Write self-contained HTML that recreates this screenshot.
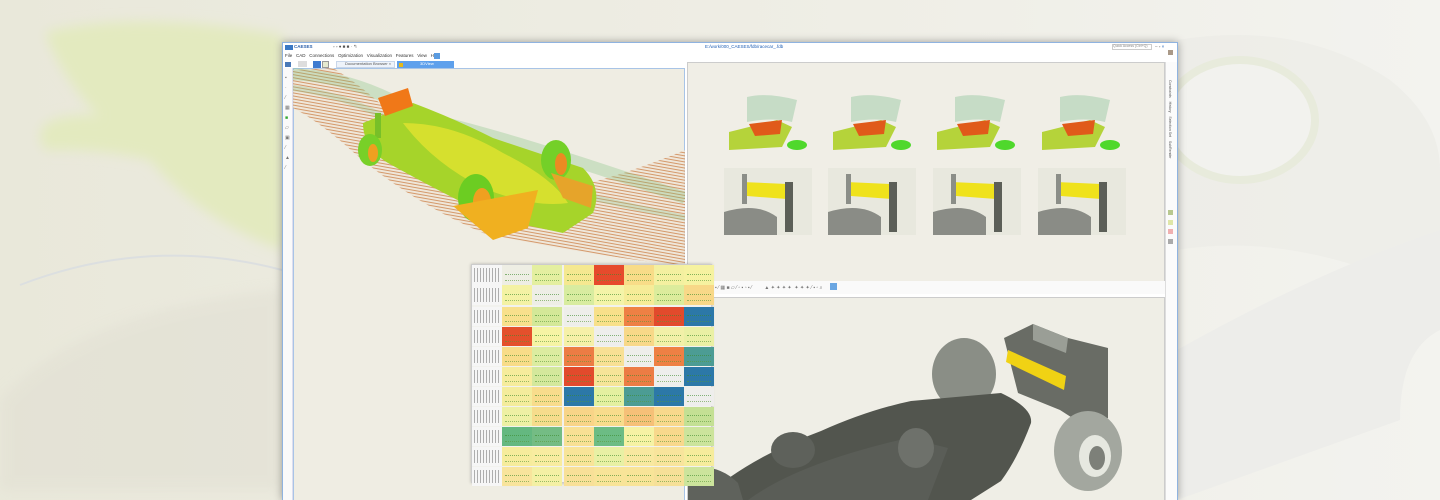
<!DOCTYPE html>
<html><head><meta charset="utf-8"><style>
*{margin:0;padding:0;box-sizing:border-box}
html,body{width:1440px;height:500px;overflow:hidden}
body{background:#ecebe0;font-family:"Liberation Sans",sans-serif;position:relative}
.a{position:absolute}
svg{overflow:hidden}
.t{font-size:4.5px;color:#333;white-space:nowrap}
#grid{position:absolute;left:471px;top:264px;width:241px;height:219px;background:#f2f2ee;border:1px solid #ccc;box-shadow:0 0 3px rgba(0,0,0,.25)}
.r{display:flex;height:19.5px;margin-bottom:.5px}
.r div{flex:0 0 29.5px;margin-right:.5px;position:relative;overflow:hidden}
.r div.s{background:#f6f6f6}
.r div:nth-child(4){margin-left:2px}
.r div::after{content:"";position:absolute;left:3px;right:3px;top:45%;height:5px;border-top:1px dotted #3a8a2a;border-bottom:1px dotted #5a9a3a;opacity:.6}
.r div.s::after{border:none;left:2px;right:2px;top:3px;bottom:3px;height:auto;background:repeating-linear-gradient(90deg,#666 0 1px,transparent 1px 3px);opacity:.5}
</style></head><body>
<svg class="a" style="left:0;top:0" width="1440" height="500">
<defs>
<linearGradient id="bg" x1="0" x2="1"><stop offset="0" stop-color="#e9e8da"/><stop offset=".6" stop-color="#efeee6"/><stop offset="1" stop-color="#f3f3ef"/></linearGradient>
<filter id="bl"><feGaussianBlur stdDeviation="6"/></filter>
<pattern id="st" width="4" height="3" patternUnits="userSpaceOnUse" patternTransform="rotate(10)"><rect width="4" height="3" fill="#efe6d8"/><rect width="4" height="1" fill="#cf8a56"/></pattern>
</defs>
<rect width="1440" height="500" fill="url(#bg)"/>
<path d="M45 32 Q140 10 282 35 L282 250 Q200 220 150 160 Q100 148 45 150 Q30 125 60 118 Q90 112 100 118 Q60 75 45 32Z" fill="#e3eabf" filter="url(#bl)"/>
<path d="M0 400 Q80 310 282 290 L282 490 L0 490Z" fill="#e0ded2" opacity=".5" filter="url(#bl)"/>
<path d="M20 285 Q150 235 282 270" stroke="#dcdfe0" stroke-width="2" fill="none"/>
<path d="M1177 40 Q1300 20 1390 80 Q1440 120 1440 170 L1440 300 Q1300 230 1177 250Z" fill="#ecece7" opacity=".8"/>
<ellipse cx="1240" cy="120" rx="75" ry="60" fill="#f2f2ee" stroke="#e8ebdc" stroke-width="8"/>
<path d="M1177 350 Q1320 270 1440 230 L1440 330 Q1400 350 1400 420 L1177 500Z" fill="#ededea"/>
</svg>

<div class="a" style="left:282px;top:42px;width:896px;height:458px;background:#fff;border:1px solid #8fb3e0;border-bottom:none;box-shadow:0 0 8px rgba(0,0,0,.35)"></div>
<div class="a" style="left:285px;top:45px;width:8px;height:5px;background:#3a78c4"></div>
<div class="a t" style="left:294px;top:44px;color:#2a5ea8;font-weight:bold">CAESES</div>
<div class="a t" style="left:333px;top:44px;color:#555">▫ ▫ ● ■ ■ · ↰</div>
<div class="a t" style="left:705px;top:44px;color:#1f5fb5">E:/work/000_CAESES/fdb/racecar_.fdb</div>
<div class="a" style="left:1112px;top:44px;width:40px;height:6px;border:1px solid #ccc"></div>
<div class="a t" style="left:1113px;top:44px;font-size:3.5px;color:#888">Quick Access (Ctrl+Q)</div>
<div class="a t" style="left:1155px;top:44px;color:#666">–&nbsp;▫&nbsp;<span style="color:#1f5fb5">×</span></div>
<div class="a t" style="left:285px;top:53px">File&nbsp;&nbsp;&nbsp;CAD&nbsp;&nbsp;&nbsp;Connections&nbsp;&nbsp;&nbsp;Optimization&nbsp;&nbsp;&nbsp;Visualization&nbsp;&nbsp;&nbsp;Features&nbsp;&nbsp;&nbsp;View&nbsp;&nbsp;&nbsp;Help</div>
<div class="a" style="left:434px;top:53px;width:6px;height:6px;background:#5b9be0"></div>
<div class="a" style="left:285px;top:62px;width:6px;height:5px;background:#4a7ab8"></div>
<div class="a" style="left:298px;top:61px;width:9px;height:6px;background:#ddd"></div>
<div class="a" style="left:313px;top:61px;width:8px;height:7px;background:#3f7bd0"></div>
<div class="a" style="left:322px;top:61px;width:7px;height:7px;background:#e6ead0;border:1px solid #999"></div>
<div class="a" style="left:336px;top:61px;width:59px;height:7px;background:#eef3fa;border:1px solid #c8d6ea"></div>
<div class="a t" style="left:345px;top:61px;font-size:4px;color:#555">Documentation Browser ×</div>
<div class="a" style="left:397px;top:61px;width:57px;height:7px;background:#5ea0ec"></div>
<div class="a t" style="left:420px;top:61px;font-size:4px;color:#fff">3DView</div>
<div class="a" style="left:399px;top:63px;width:4px;height:4px;background:#e6b818"></div>
<div class="a" style="left:283px;top:68px;width:10px;height:432px;background:#fafafa;border-right:1px solid #dde"></div>
<div class="a t" style="left:285px;top:73px;color:#777;line-height:10px;font-size:5px">▪<br>·<br>⁄<br>▦<br><span style="color:#3a3">■</span><br>▱<br>▣<br>⁄<br>▲<br>⁄</div>
<div class="a" style="left:293px;top:68px;width:392px;height:432px;background:#efede3;border:1px solid #a8c4e6;border-bottom:none"></div>
<svg class="a" style="left:293px;top:68px" width="392" height="300">
<path d="M0 2 L40 0 Q90 30 160 110 Q230 150 392 82 L392 198 Q280 185 190 165 Q110 130 50 75 Q20 50 0 40Z" fill="url(#st)" opacity=".85"/>
<path d="M0 6 Q70 10 130 50 Q220 70 392 130" stroke="#7cc07c" stroke-width="12" fill="none" opacity=".3"/>
<path d="M0 20 Q80 30 150 90 Q250 120 392 150" stroke="#8cc48c" stroke-width="6" fill="none" opacity=".3"/>
<path d="M70 55 L120 35 Q160 50 200 70 L290 100 Q310 120 300 145 L270 165 L200 150 Q140 120 95 95 Q70 80 70 55Z" fill="#a6d42a"/>
<path d="M110 55 Q160 55 210 85 Q260 110 275 135 Q240 140 190 120 Q140 95 110 55Z" fill="#d6e02e"/>
<path d="M85 30 L115 20 L120 38 L92 48Z" fill="#f07818"/>
<rect x="82" y="45" width="6" height="25" fill="#78c028"/>
<ellipse cx="77" cy="82" rx="12" ry="16" fill="#78d028"/><ellipse cx="80" cy="85" rx="5" ry="9" fill="#eea020"/>
<ellipse cx="183" cy="130" rx="18" ry="24" fill="#6ccd22"/><ellipse cx="189" cy="134" rx="9" ry="14" fill="#f0a020"/>
<ellipse cx="263" cy="92" rx="15" ry="20" fill="#74d028"/><ellipse cx="268" cy="96" rx="6" ry="11" fill="#eb8a22"/>
<path d="M160 138 L245 122 L235 160 L200 172Z" fill="#f0b020"/>
<path d="M258 105 L300 118 L298 140 L270 130Z" fill="#e6a42a"/>
</svg>
<div class="a" style="left:687px;top:62px;width:478px;height:232px;background:#f0eee6;border:1px solid #ccc"></div>
<svg class="a" style="left:687px;top:62px" width="478" height="232">
<g id="f"><path d="M60 35 Q80 30 110 38 L105 60 Q85 55 60 60Z" fill="#b4d4b8" opacity=".7"/><path d="M42 70 L90 58 L105 65 L95 85 L42 88Z" fill="#b5d33a"/><path d="M62 62 L95 58 L93 72 L68 74Z" fill="#e05a1a"/><ellipse cx="110" cy="83" rx="10" ry="5" fill="#4fd82c"/></g>
<use href="#f" x="104"/><use href="#f" x="208"/><use href="#f" x="313"/>
<g id="w"><rect x="37" y="106" width="88" height="67" fill="#e8e8de"/><path d="M37 150 Q70 140 90 155 L90 173 L37 173Z" fill="#8a8c86"/><path d="M55 120 L100 122 L100 137 L60 134Z" fill="#efe21c"/><rect x="98" y="120" width="8" height="50" fill="#5c5f58"/><rect x="55" y="112" width="5" height="30" fill="#8b8e88"/></g>
<use href="#w" x="104"/><use href="#w" x="209"/><use href="#w" x="314"/>
<rect x="0" y="219" width="478" height="13" fill="#fafafa"/>
<rect x="143" y="221" width="7" height="7" fill="#6aa6e2"/>
<text x="28" y="227" font-size="5" fill="#777" font-family="Liberation Sans">▪ ⁄ ▦ ■ ▱ ⁄ ▫ ▪ ▫ ▪ ⁄ &#160; &#160; &#160; &#160; ▲ ✦ ✦ ✦ ✦ &#160;✦ ✦ ✦ ⁄ ▪ ▫ ⌕</text>
</svg>
<div class="a" style="left:687px;top:297px;width:478px;height:203px;background:#efeee6;border:1px solid #ccc;border-bottom:none;overflow:hidden">
<svg style="position:absolute;left:0;top:0" width="476" height="202">
<ellipse cx="276" cy="76" rx="32" ry="36" fill="#8a8e86"/>
<path d="M316 40 L345 26 L380 40 L420 50 L420 120 L400 130 L372 112 L330 95Z" fill="#696c65"/>
<path d="M345 26 L380 40 L378 55 L345 42Z" fill="#9a9e96"/>
<path d="M320 52 L378 78 L376 92 L318 64Z" fill="#f0d214"/>
<path d="M13 202 Q60 160 133 133 Q180 112 223 103 L313 95 Q345 110 343 125 Q330 160 313 183 L283 202Z" fill="#52554e"/>
<path d="M60 202 Q110 165 220 140 L260 150 L240 202Z" fill="#5a5d57"/>
<ellipse cx="228" cy="150" rx="18" ry="20" fill="#6e716b"/>
<ellipse cx="105" cy="152" rx="22" ry="18" fill="#5e615b"/>
<path d="M0 170 Q30 165 50 185 L55 202 L0 202Z" fill="#5f625c"/>
<ellipse cx="400" cy="153" rx="34" ry="40" fill="#a3a79f"/><ellipse cx="407" cy="158" rx="16" ry="21" fill="#e6e8e0"/><ellipse cx="409" cy="160" rx="8" ry="12" fill="#7d8079"/>
</svg></div>
<div class="a" style="left:1165px;top:62px;width:12px;height:438px;background:#fbfbfb;border-left:1px solid #ddd"></div>
<div class="a" style="left:1168px;top:50px;width:5px;height:5px;background:#a98"></div>
<div class="a t" style="left:1164px;top:80px;font-size:3.5px;color:#555;writing-mode:vertical-rl;line-height:12px">Constraints&nbsp;&nbsp;&nbsp;&nbsp;History&nbsp;&nbsp;&nbsp;&nbsp;Selection Set&nbsp;&nbsp;&nbsp;&nbsp;SubRender</div>
<div class="a" style="left:1168px;top:210px;width:5px;height:5px;background:#b8c890"></div>
<div class="a" style="left:1168px;top:220px;width:5px;height:5px;background:#dfe6a8"></div>
<div class="a" style="left:1168px;top:229px;width:5px;height:5px;background:#f0b0b0"></div>
<div class="a" style="left:1168px;top:239px;width:5px;height:5px;background:#aaa"></div>

<div id="grid">
<div class="r"><div class="s"></div><div style="background:#eeeee4"></div><div style="background:#e4efa0"></div><div style="background:#f5e890"></div><div style="background:#e64a2c"></div><div style="background:#f8dc88"></div><div style="background:#f4f0a0"></div><div style="background:#f6f2a0"></div></div>
<div class="r"><div class="s"></div><div style="background:#f4f2a4"></div><div style="background:#eeeee6"></div><div style="background:#d8eca0"></div><div style="background:#f4f4a8"></div><div style="background:#f6ec98"></div><div style="background:#dcec9c"></div><div style="background:#f8d888"></div></div>
<div class="r" style="margin-top:2px"><div class="s"></div><div style="background:#f8e08c"></div><div style="background:#d4e898"></div><div style="background:#eeeeea"></div><div style="background:#f8e08a"></div><div style="background:#ee8044"></div><div style="background:#e24a2c"></div><div style="background:#2c78a8"></div></div>
<div class="r"><div class="s"></div><div style="background:#e4502c"></div><div style="background:#f6f4a4"></div><div style="background:#f6f0a8"></div><div style="background:#eeeeec"></div><div style="background:#f8d888"></div><div style="background:#f2f0a8"></div><div style="background:#eaf0a4"></div></div>
<div class="r"><div class="s"></div><div style="background:#f8dc88"></div><div style="background:#dceca0"></div><div style="background:#ec7c44"></div><div style="background:#f8e094"></div><div style="background:#eeeeea"></div><div style="background:#ee8044"></div><div style="background:#4c9c94"></div></div>
<div class="r"><div class="s"></div><div style="background:#f6ec9c"></div><div style="background:#d4e89c"></div><div style="background:#e24a2c"></div><div style="background:#f6e498"></div><div style="background:#ec7c44"></div><div style="background:#eeeeec"></div><div style="background:#2c78a8"></div></div>
<div class="r"><div class="s"></div><div style="background:#f4ec9c"></div><div style="background:#f8dc8c"></div><div style="background:#2c78a8"></div><div style="background:#e4f0a0"></div><div style="background:#4c9c94"></div><div style="background:#2c78a8"></div><div style="background:#eeeeec"></div></div>
<div class="r"><div class="s"></div><div style="background:#eef0a4"></div><div style="background:#f6dc8c"></div><div style="background:#f8d488"></div><div style="background:#f8dc8c"></div><div style="background:#f6c078"></div><div style="background:#f8d88c"></div><div style="background:#c4e094"></div></div>
<div class="r"><div class="s"></div><div style="background:#64b880"></div><div style="background:#74bc84"></div><div style="background:#f8e094"></div><div style="background:#6cbc84"></div><div style="background:#f6f2a4"></div><div style="background:#f8d88c"></div><div style="background:#cce49c"></div></div>
<div class="r"><div class="s"></div><div style="background:#f6ec9c"></div><div style="background:#f8eca0"></div><div style="background:#f8e498"></div><div style="background:#e8f0a4"></div><div style="background:#f8e8a0"></div><div style="background:#f8e49c"></div><div style="background:#f6ec9c"></div></div>
<div class="r"><div class="s"></div><div style="background:#f8e49c"></div><div style="background:#f4f0a4"></div><div style="background:#f8e098"></div><div style="background:#f8e498"></div><div style="background:#f8e498"></div><div style="background:#f6e098"></div><div style="background:#cce49c"></div></div>
</div>
</body></html>
